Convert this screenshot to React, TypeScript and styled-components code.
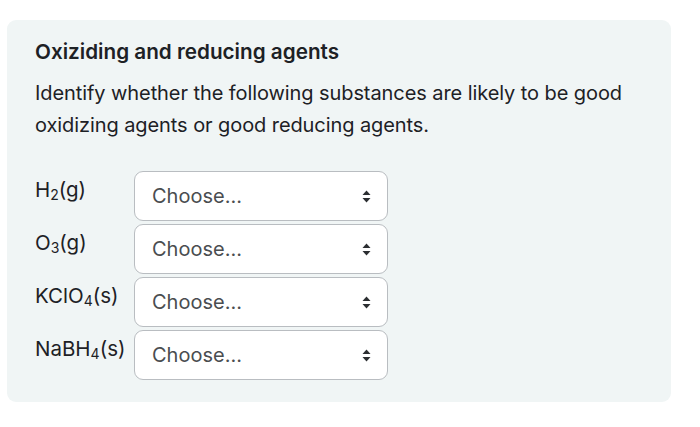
import React from 'react';
import styled, { createGlobalStyle } from 'styled-components';

const GlobalStyle = createGlobalStyle`
  html, body {
    margin: 0;
    padding: 0;
    background: #ffffff;
  }
  body {
    font-family: Inter, "Noto Sans", sans-serif;
    color: #1d2125;
  }
`;

const substances = [
  { formula: 'H', sub: '2', state: '(g)' },
  { formula: 'O', sub: '3', state: '(g)' },
  { formula: 'KClO', sub: '4', state: '(s)' },
  { formula: 'NaBH', sub: '4', state: '(s)' },
];

const Page = styled.div`
  padding: 20px 29px 25px 7px;
  width: 700px;
  box-sizing: border-box;
`;

const Card = styled.section`
  background: #f0f5f5;
  border-radius: 9px;
  padding: 19px 28px 23px 28px;
  height: 382px;
  box-sizing: border-box;
`;

const Title = styled.h3`
  margin: 0;
  font-size: 20.7px;
  font-weight: 600;
  line-height: 26px;
  color: #1d2125;
`;

const Prompt = styled.p`
  margin: 12px 0 0 0;
  font-size: 20px;
  line-height: 32px;
  letter-spacing: -0.08px;
  color: #1d2125;
`;

const Rows = styled.div`
  margin-top: 30px;
  display: flex;
  flex-direction: column;
  gap: 3px;
`;

const Row = styled.div`
  display: flex;
  align-items: flex-start;
`;

const Label = styled.div`
  width: 99px;
  padding-top: 6px;
  font-size: 20.5px;
  line-height: 25px;
  color: #1d2125;

  sub {
    font-size: 14px;
    vertical-align: baseline;
    position: relative;
    top: 3px;
  }
`;

const Select = styled.div`
  width: 254px;
  height: 50px;
  box-sizing: border-box;
  background: #ffffff;
  border: 1px solid #b9bdc1;
  border-radius: 9px;
  display: flex;
  align-items: center;
  justify-content: space-between;
  padding: 0 16px 0 17px;
  font-size: 20px;
  color: #4a4d50;
`;

const Arrows = () => (
  <svg width="9" height="13" viewBox="0 0 9 13">
    <path d="M4.5 0.5 L8.5 5 L0.5 5 Z" fill="#2b2e31" />
    <path d="M4.5 12.5 L8.5 8 L0.5 8 Z" fill="#2b2e31" />
  </svg>
);

const App = () => (
  <>
    <GlobalStyle />
    <Page>
      <Card>
        <Title>Oxiziding and reducing agents</Title>
        <Prompt>
          Identify whether the following substances are likely to be good
          oxidizing agents or good reducing agents.
        </Prompt>
        <Rows>
          {substances.map((s) => (
            <Row key={s.formula}>
              <Label>
                {s.formula}
                <sub>{s.sub}</sub>
                {s.state}
              </Label>
              <Select>
                <span>Choose...</span>
                <Arrows />
              </Select>
            </Row>
          ))}
        </Rows>
      </Card>
    </Page>
  </>
);

export default App;
